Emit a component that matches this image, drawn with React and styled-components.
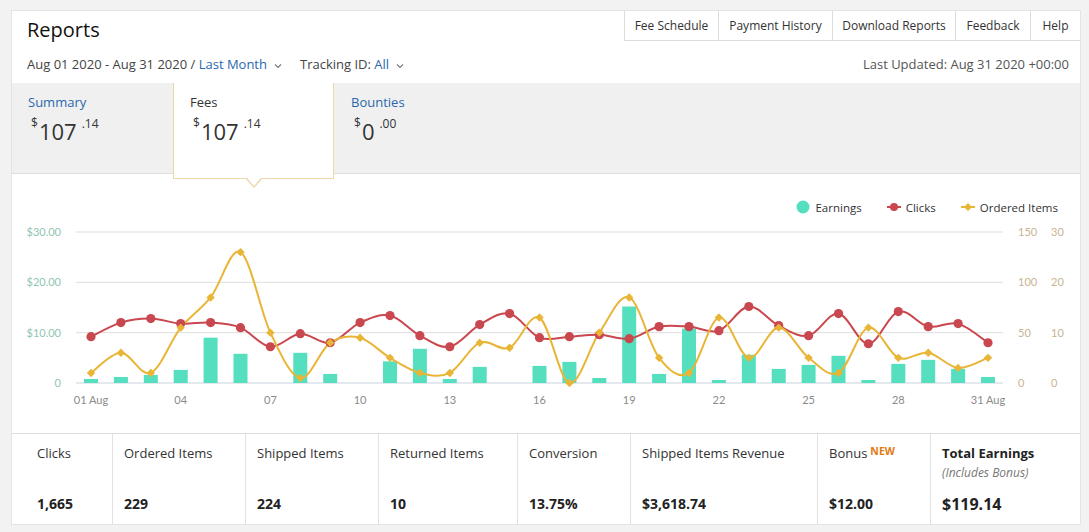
import React from "react";
import styled, { createGlobalStyle } from "styled-components";

const GlobalStyle = createGlobalStyle`
  html, body { margin: 0; padding: 0; background: #f2f2f2; }
  body { font-family: "Open Sans", "Noto Sans", Arial, sans-serif; color: #333; }
  * { box-sizing: border-box; }
`;

const Page = styled.div`
  padding: 11px 9px 8px 12px;
`;

const Panel = styled.div`
  width: 1068px;
  background: #fff;
  box-shadow: 0 0 0 1px #e4e4e4;
`;

const Header = styled.div`
  height: 72px;
  padding-left: 15px;
`;

const TopRow = styled.div`
  display: flex;
  justify-content: space-between;
  align-items: flex-start;
`;

const Title = styled.h1`
  margin: 4px 0 0;
  font-size: 20px;
  line-height: 30px;
  font-weight: 400;
  color: #111;
`;

const Nav = styled.nav`
  display: flex;
`;

const NavItem = styled.a`
  width: ${(p) => p.$w}px;
  height: 30px;
  display: flex;
  align-items: center;
  justify-content: center;
  border-left: 1px solid #dcdcdc;
  border-bottom: 1px solid #dcdcdc;
  font-size: 12px;
  color: #333;
  white-space: nowrap;
`;

const MetaRow = styled.div`
  display: flex;
  justify-content: space-between;
  align-items: center;
  margin-top: 10px;
  padding-right: 11px;
  font-size: 13px;
  line-height: 18px;
  color: #444;
`;

const Filters = styled.div`
  display: flex;
  align-items: center;
`;

const Filter = styled.span`
  display: inline-flex;
  align-items: center;
  margin-right: ${(p) => p.$mr || 0}px;
  white-space: nowrap;
`;

const Link = styled.span`
  color: #2a68ad;
`;

const Chevron = styled.svg`
  margin-left: 7px;
  margin-top: 3px;
`;

const Updated = styled.span`
  color: #555;
`;

const TabStrip = styled.div`
  display: flex;
  height: 91px;
  background: #f0f0f0;
  border-bottom: 1px solid #dedede;
`;

const Tab = styled.div`
  position: relative;
  width: 161px;
  height: ${(p) => (p.$active ? 96 : 90)}px;
  padding: 10px ${(p) => (p.$first ? 15 : 16)}px 0;
  background: ${(p) => (p.$active ? "#fff" : "transparent")};
  border: 1px solid ${(p) => (p.$active ? "#ecd8a8" : "transparent")};
  border-top: none;
  z-index: ${(p) => (p.$active ? 2 : 1)};

  ${(p) =>
    p.$active &&
    `
    &::before, &::after {
      content: "";
      position: absolute;
      left: 50%;
      width: 0;
      height: 0;
      border-style: solid;
      transform: translateX(-50%);
    }
    &::before {
      bottom: -10px;
      border-width: 10px 9px 0 9px;
      border-color: #ecd8a8 transparent transparent transparent;
    }
    &::after {
      bottom: -8px;
      border-width: 9px 8px 0 8px;
      border-color: #fff transparent transparent transparent;
    }
  `}
`;

const TabLabel = styled.div`
  font-size: 13px;
  line-height: 18px;
  color: ${(p) => (p.$link ? "#2a68ad" : "#333")};
`;

const Amount = styled.div`
  display: flex;
  align-items: flex-start;
  margin: 4px 0 0 3px;
  color: #333;
  line-height: 1;
`;

const Sup = styled.span`
  font-size: 12px;
  margin-top: ${(p) => p.$mt || 2}px;
`;

const Big = styled.span`
  font-size: 22px;
  margin: 5px 5px 0 1px;
`;

const ChartSection = styled.div`
  height: 259px;
  display: flex;
  flex-direction: column;
`;

const Legend = styled.div`
  display: flex;
  justify-content: flex-end;
  gap: 25px;
  margin-top: 25px;
  height: 16px;
  padding-right: 22px;
  font-size: 11.5px;
  color: #333;
`;

const LegendItem = styled.div`
  display: flex;
  align-items: center;
  gap: 5px;
  white-space: nowrap;
`;

const ChartSvg = styled.svg`
  display: block;
  width: 1068px;
  height: 218px;
`;

const Stats = styled.div`
  display: grid;
  grid-template-columns: 100px 133px 133px 139px 113px 187px 113px 150px;
  border-top: 1px solid #dedede;
  height: 91px;
`;

const Stat = styled.div`
  display: flex;
  flex-direction: column;
  justify-content: space-between;
  padding: 10px 8px 11px ${(p) => (p.$first ? 25 : 11)}px;
  border-left: ${(p) => (p.$first ? "none" : "1px solid #e2e2e2")};
`;

const StatLabel = styled.div`
  font-size: 13px;
  line-height: 18px;
  height: 18px;
  color: ${(p) => (p.$strong ? "#222" : "#333")};
  font-weight: ${(p) => (p.$strong ? 700 : 400)};
  white-space: nowrap;
`;

const NewBadge = styled.sup`
  color: #e47911;
  font-size: 10.5px;
  font-weight: 700;
  line-height: 0;
  vertical-align: 3px;
  margin-left: 3px;
`;

const Note = styled.div`
  font-size: 12px;
  line-height: 16px;
  font-style: italic;
  color: #777;
  margin-top: 3px;
`;

const StatValue = styled.div`
  font-size: ${(p) => (p.$big ? 16 : 14)}px;
  line-height: 18px;
  font-weight: 700;
  color: #222;
`;

const earnings = [0.8, 1.2, 1.6, 2.6, 9, 5.8, 0, 6, 1.8, 0, 4.3, 6.8, 0.8, 3.2, 0, 3.4, 4.2, 1, 15.2, 1.8, 10.8, 0.6, 5.6, 2.8, 3.6, 5.4, 0.6, 3.8, 4.6, 2.8, 1.2];
const clicks = [46, 60, 64, 59, 60, 55, 36, 49, 40, 60, 67, 47, 36, 58, 69, 45, 46, 48, 44, 56, 56, 52, 76, 57, 47, 69, 39, 71, 56, 59, 40];
const items = [2, 6, 2, 11, 17, 26, 10, 1, 8, 9, 5, 2, 2, 8, 7, 13, 0, 10, 17, 5, 2, 13, 5, 11, 5, 2, 11, 5, 6, 3, 5];

const Y0 = 383;
const H = 151;
const xOf = (i) => 91 + i * 29.9;

const TEAL = "#55dfbf";
const RED = "#c9474e";
const GOLD = "#e9b536";

function spline(pts) {
  let d = `M${pts[0][0]},${pts[0][1]}`;
  for (let i = 0; i < pts.length - 1; i++) {
    const p0 = pts[i - 1] || pts[i];
    const p1 = pts[i];
    const p2 = pts[i + 1];
    const p3 = pts[i + 2] || p2;
    const c1x = p1[0] + (p2[0] - p0[0]) / 6;
    const c1y = p1[1] + (p2[1] - p0[1]) / 6;
    const c2x = p2[0] - (p3[0] - p1[0]) / 6;
    const c2y = p2[1] - (p3[1] - p1[1]) / 6;
    d += ` C${c1x.toFixed(1)},${c1y.toFixed(1)} ${c2x.toFixed(1)},${c2y.toFixed(1)} ${p2[0].toFixed(1)},${p2[1].toFixed(1)}`;
  }
  return d;
}

const Diamond = ({ x, y, r = 4, color }) => (
  <polygon points={`${x},${y - r} ${x + r},${y} ${x},${y + r} ${x - r},${y}`} fill={color} />
);

function Chart() {
  const clickPts = clicks.map((v, i) => [xOf(i), Y0 - (v / 150) * H]);
  const itemPts = items.map((v, i) => [xOf(i), Y0 - (v / 30) * H]);
  const grid = [0, 1, 2, 3].map((k) => Y0 - (k * H) / 3);
  const leftLabels = ["0", "$10.00", "$20.00", "$30.00"];
  const mid = ["0", "50", "100", "150"];
  const right = ["0", "10", "20", "30"];
  const xLabels = [
    [0, "01 Aug"], [3, "04"], [6, "07"], [9, "10"], [12, "13"], [15, "16"],
    [18, "19"], [21, "22"], [24, "25"], [27, "28"], [30, "31 Aug"],
  ];
  return (
    <ChartSvg viewBox="12 215 1068 218">
      <g fontFamily="Lato, 'Open Sans', sans-serif" fontSize="11">
        {grid.map((y, k) => (
          <g key={k}>
            <line x1="76" x2="1003" y1={y} y2={y} stroke={k === 0 ? "#c7d3df" : "#dedede"} strokeWidth="1" />
            <text x="61" y={y + 4} textAnchor="end" fill="#8fc5b1">{leftLabels[k]}</text>
            <text x="1018" y={y + 4} fill="#c9b392">{mid[k]}</text>
            <text x="1051" y={y + 4} fill="#c9b392">{right[k]}</text>
          </g>
        ))}
        {xLabels.map(([i, t]) => (
          <text key={t} x={xOf(i)} y="404" textAnchor="middle" fill="#8a8a8a">{t}</text>
        ))}
      </g>
      {earnings.map((v, i) =>
        v > 0 ? (
          <rect key={i} x={xOf(i) - 7} y={Y0 - (v / 30) * H} width="14" height={(v / 30) * H} fill={TEAL} />
        ) : null
      )}
      <path d={spline(clickPts)} fill="none" stroke={RED} strokeWidth="2" />
      <path d={spline(itemPts)} fill="none" stroke={GOLD} strokeWidth="2" />
      {clickPts.map(([x, y], i) => (
        <circle key={i} cx={x} cy={y} r="4.6" fill={RED} />
      ))}
      {itemPts.map(([x, y], i) => (
        <Diamond key={i} x={x} y={y} r={4.2} color={GOLD} />
      ))}
    </ChartSvg>
  );
}

const ChevronDown = () => (
  <Chevron width="8" height="6" viewBox="0 0 8 6">
    <polyline points="1,1.5 4,4.5 7,1.5" fill="none" stroke="#777" strokeWidth="1.1" />
  </Chevron>
);

export default function App() {
  return (
    <>
      <GlobalStyle />
      <Page>
        <Panel>
          <Header>
            <TopRow>
              <Title>Reports</Title>
              <Nav>
                <NavItem $w={94}>Fee Schedule</NavItem>
                <NavItem $w={114}>Payment History</NavItem>
                <NavItem $w={123}>Download Reports</NavItem>
                <NavItem $w={75}>Feedback</NavItem>
                <NavItem $w={50}>Help</NavItem>
              </Nav>
            </TopRow>
            <MetaRow>
              <Filters>
                <Filter $mr={18}>
                  Aug 01 2020 - Aug 31 2020 /&nbsp;<Link>Last Month</Link>
                  <ChevronDown />
                </Filter>
                <Filter>
                  Tracking ID:&nbsp;<Link>All</Link>
                  <ChevronDown />
                </Filter>
              </Filters>
              <Updated>Last Updated: Aug 31 2020 +00:00</Updated>
            </MetaRow>
          </Header>

          <TabStrip>
            <Tab $first>
              <TabLabel $link>Summary</TabLabel>
              <Amount>
                <Sup>$</Sup>
                <Big>107</Big>
                <Sup $mt={3}>.14</Sup>
              </Amount>
            </Tab>
            <Tab $active>
              <TabLabel>Fees</TabLabel>
              <Amount>
                <Sup>$</Sup>
                <Big>107</Big>
                <Sup $mt={3}>.14</Sup>
              </Amount>
            </Tab>
            <Tab>
              <TabLabel $link>Bounties</TabLabel>
              <Amount>
                <Sup>$</Sup>
                <Big>0</Big>
                <Sup $mt={3}>.00</Sup>
              </Amount>
            </Tab>
          </TabStrip>

          <ChartSection>
            <Legend>
              <LegendItem>
                <svg width="14" height="14" viewBox="0 0 14 14">
                  <circle cx="7" cy="7" r="6.5" fill={TEAL} />
                </svg>
                Earnings
              </LegendItem>
              <LegendItem>
                <svg width="14" height="10" viewBox="0 0 14 10">
                  <line x1="0" x2="14" y1="5" y2="5" stroke={RED} strokeWidth="2" />
                  <circle cx="7" cy="5" r="4" fill={RED} />
                </svg>
                Clicks
              </LegendItem>
              <LegendItem>
                <svg width="14" height="10" viewBox="0 0 14 10">
                  <line x1="0" x2="14" y1="5" y2="5" stroke={GOLD} strokeWidth="2" />
                  <polygon points="7,1 11,5 7,9 3,5" fill={GOLD} />
                </svg>
                Ordered Items
              </LegendItem>
            </Legend>
            <Chart />
          </ChartSection>

          <Stats>
            <Stat $first>
              <StatLabel>Clicks</StatLabel>
              <StatValue>1,665</StatValue>
            </Stat>
            <Stat>
              <StatLabel>Ordered Items</StatLabel>
              <StatValue>229</StatValue>
            </Stat>
            <Stat>
              <StatLabel>Shipped Items</StatLabel>
              <StatValue>224</StatValue>
            </Stat>
            <Stat>
              <StatLabel>Returned Items</StatLabel>
              <StatValue>10</StatValue>
            </Stat>
            <Stat>
              <StatLabel>Conversion</StatLabel>
              <StatValue>13.75%</StatValue>
            </Stat>
            <Stat>
              <StatLabel>Shipped Items Revenue</StatLabel>
              <StatValue>$3,618.74</StatValue>
            </Stat>
            <Stat>
              <StatLabel>
                Bonus<NewBadge>NEW</NewBadge>
              </StatLabel>
              <StatValue>$12.00</StatValue>
            </Stat>
            <Stat>
              <div>
                <StatLabel $strong>Total Earnings</StatLabel>
                <Note>(Includes Bonus)</Note>
              </div>
              <StatValue $big>$119.14</StatValue>
            </Stat>
          </Stats>
        </Panel>
      </Page>
    </>
  );
}
